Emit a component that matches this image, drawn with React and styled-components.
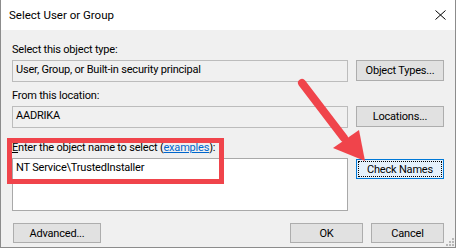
import styled, { createGlobalStyle } from "styled-components";

const GlobalStyle = createGlobalStyle`
    html, body {
        margin: 0;
        padding: 0;
        background: #ffffff;
    }
    body {
        font-family: Roboto, "Liberation Sans", sans-serif;
        font-size: 11px;
        letter-spacing: -0.2px;
        color: #000;
    }
`;

const Window = styled.div`
    position: relative;
    width: 456px;
    height: 248px;
    box-sizing: border-box;
    border: 1px solid #8c8c8c;
    border-top: none;
    background: #f0f0f0;
    overflow: hidden;
`;

const TitleBar = styled.div`
    height: 30px;
    background: #ffffff;
    display: flex;
    align-items: center;
    justify-content: space-between;
    padding: 0 9px 0 8px;
    font-size: 11.5px;
    letter-spacing: 0;
`;

const CloseIcon = styled.svg`
    width: 11px;
    height: 10px;
`;

const Body = styled.div`
    padding: 12px 11px 0 11px;
    display: flex;
    flex-direction: column;
`;

const Label = styled.div`
    line-height: 15px;
    height: 15px;
    margin-top: ${(p) => p.$top || 0}px;
    margin-bottom: 3px;
    white-space: nowrap;

    & a {
        color: #0066cc;
        text-decoration: underline;
    }
`;

const FieldRow = styled.div`
    display: grid;
    grid-template-columns: 336px 88px;
    column-gap: 8px;
    align-items: start;
`;

const Field = styled.div`
    box-sizing: border-box;
    height: ${(p) => p.$height || 22}px;
    border: 1px solid ${(p) => (p.$editable ? "#a9a9a9" : "#bcbcbc")};
    background: ${(p) => (p.$editable ? "#ffffff" : "#f0f0f0")};
    padding: 1px 3px;
    line-height: 15px;
    white-space: nowrap;
`;

const Button = styled.div`
    box-sizing: border-box;
    position: relative;
    width: ${(p) => p.$width || 88}px;
    height: ${(p) => p.$height || 21}px;
    margin-top: ${(p) => p.$top || 0}px;
    border: 1px solid ${(p) => (p.$focused ? "#0078d7" : "#adadad")};
    background: ${(p) => (p.$focused ? "#e5f1fb" : "#e1e1e1")};
    display: flex;
    align-items: center;
    justify-content: center;
    line-height: 15px;
    white-space: nowrap;

    ${(p) =>
        p.$focused &&
        `&::after {
            content: "";
            position: absolute;
            inset: 1px;
            border: 1px dotted #000;
        }`}
`;

const Footer = styled.div`
    margin-top: 12px;
    display: flex;
    align-items: center;
    gap: 8px;

    & > :first-child {
        margin-left: 1px;
        margin-right: auto;
    }
`;

const Grip = styled.svg`
    position: absolute;
    right: 1px;
    bottom: 1px;
    width: 8px;
    height: 8px;
`;

const Highlight = styled.div`
    position: absolute;
    left: 6px;
    top: 138px;
    width: 217px;
    height: 46px;
    box-sizing: border-box;
    border: 5px solid #f0444b;
    pointer-events: none;
`;

const Arrow = styled.svg`
    position: absolute;
    left: 0;
    top: 0;
    width: 456px;
    height: 248px;
    pointer-events: none;
`;

const App = () => {
    return (
        <>
            <GlobalStyle />
            <Window>
                <TitleBar>
                    <span>Select User or Group</span>
                    <CloseIcon viewBox="0 0 11 10">
                        <path d="M0.5 0.5 L10.5 9.5 M10.5 0.5 L0.5 9.5" stroke="#000" strokeWidth="1" />
                    </CloseIcon>
                </TitleBar>
                <Body>
                    <Label>Select this object type:</Label>
                    <FieldRow>
                        <Field>User, Group, or Built-in security principal</Field>
                        <Button>Object Types...</Button>
                    </FieldRow>

                    <Label $top={6}>From this location:</Label>
                    <FieldRow>
                        <Field>AADRIKA</Field>
                        <Button>Locations...</Button>
                    </FieldRow>

                    <Label $top={12}>
                        <u>E</u>nter the object name to select (<a>examples</a>):
                    </Label>
                    <FieldRow>
                        <Field $editable $height={53}>NT Service\TrustedInstaller</Field>
                        <Button $focused $top={1} $height={20}>Check Names</Button>
                    </FieldRow>

                    <Footer>
                        <Button $height={20}>Advanced...</Button>
                        <Button $width={73} $height={20}>OK</Button>
                        <Button $width={73} $height={20}>Cancel</Button>
                    </Footer>
                </Body>

                <Grip viewBox="0 0 8 8">
                    <rect x="6" y="0" width="2" height="2" fill="#b8b8b8" />
                    <rect x="3" y="3" width="2" height="2" fill="#b8b8b8" />
                    <rect x="6" y="3" width="2" height="2" fill="#b8b8b8" />
                    <rect x="0" y="6" width="2" height="2" fill="#b8b8b8" />
                    <rect x="3" y="6" width="2" height="2" fill="#b8b8b8" />
                    <rect x="6" y="6" width="2" height="2" fill="#b8b8b8" />
                </Grip>

                <Highlight />

                <Arrow viewBox="0 0 456 248">
                    <line x1="301" y1="83" x2="343" y2="138" stroke="#f0444b" strokeWidth="8" strokeLinecap="round" />
                    <polygon points="332,148 358,130 364,161" fill="#f0444b" />
                </Arrow>
            </Window>
        </>
    );
};

export default App;
